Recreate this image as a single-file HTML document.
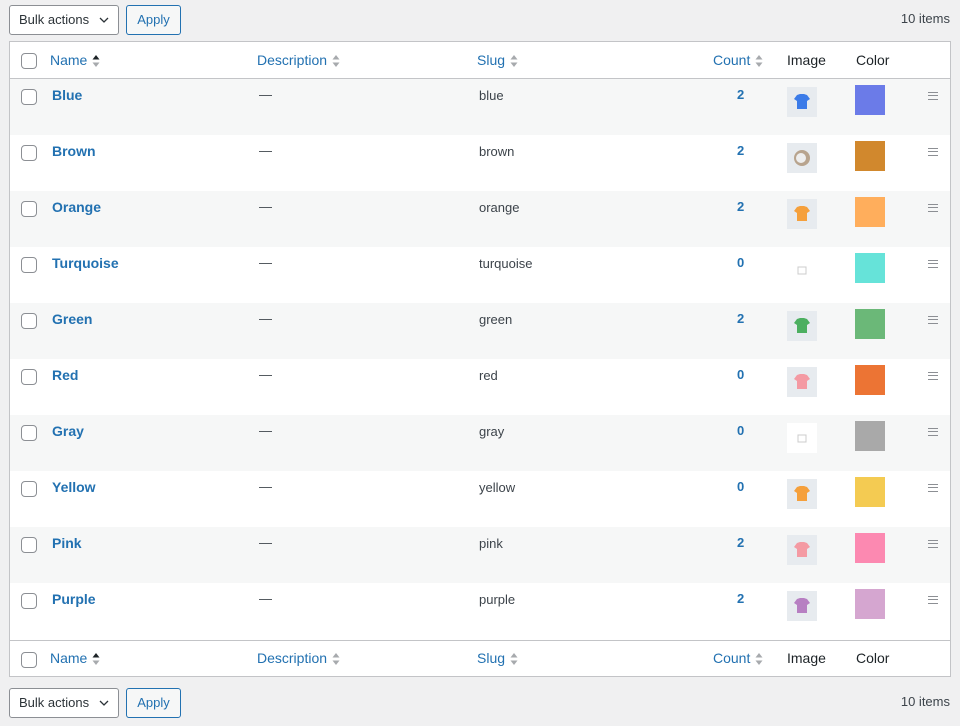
<!DOCTYPE html><html><head><style>
body{margin:0;background:#f0f0f1;font-family:"Liberation Sans",sans-serif;font-size:13px;color:#3c434a;width:960px;height:726px;position:relative;overflow:hidden}
.btn{position:absolute;height:30px;box-sizing:border-box;border-radius:3px;line-height:28px;font-size:13px}
.sel{left:9px;width:110px;border:1px solid #8c8f94;background:#fff;color:#2c3338;padding-left:9px}
.sel svg{position:absolute;right:9px;top:10px}
.apply{left:126px;width:55px;border:1px solid #2271b1;color:#2271b1;background:#f6f7f7;text-align:center}
.items{position:absolute;right:10px;font-size:13px;color:#3c434a}
.tbl{position:absolute;left:9px;top:41px;width:942px;height:636px;box-sizing:border-box;border:1px solid #c3c4c7;background:#fff}
.hd{position:absolute;left:0;width:940px;height:36px}
.row{position:absolute;left:0;width:940px;height:56px}
.odd{background:#f6f7f7}
.cb{position:absolute;left:11px;width:14px;height:14px;border:1px solid #8c8f94;border-radius:4px;background:#fff}
.a{position:absolute;color:#2271b1;font-size:14px}
.t{position:absolute;font-size:13px}
.s{display:inline-block;vertical-align:middle;margin-left:5px}
.thumb{position:absolute;left:777px;top:8px;width:30px;height:30px;background:#e7ebef}
.sw{position:absolute;left:845px;top:6px;width:30px;height:30px}
.dr{position:absolute;left:918px;top:13px;width:10px;height:6px;border-top:1px solid #8c8f94;border-bottom:1px solid #8c8f94}
.dr:after{content:"";position:absolute;left:0;right:0;top:2px;border-top:1px solid #8c8f94}
</style></head><body>
<div class="btn sel" style="top:5px">Bulk actions<svg width="10" height="8" viewBox="0 0 10 8"><path d="M1 2l4 4 4-4" fill="none" stroke="#2c3338" stroke-width="1.3"/></svg></div>
<div class="btn apply" style="top:5px">Apply</div>
<div class="items" style="top:11px">10 items</div>
<div class="btn sel" style="top:688px">Bulk actions<svg width="10" height="8" viewBox="0 0 10 8"><path d="M1 2l4 4 4-4" fill="none" stroke="#2c3338" stroke-width="1.3"/></svg></div>
<div class="btn apply" style="top:688px">Apply</div>
<div class="items" style="top:694px">10 items</div>
<div class="tbl">
<div class="hd" style="top:0;border-bottom:1px solid #c3c4c7">
<div class="cb" style="top:11px"></div>
<div class="a" style="left:40px;top:10px">Name<svg class="s" width="8" height="14"><path d="M4 1l3.5 4.5h-7z" fill="#1d2327"/><path d="M4 13l3.5-4.5h-7z" fill="#a7aaad"/></svg></div>
<div class="a" style="left:247px;top:10px">Description<svg class="s" width="8" height="14"><path d="M4 1l3.5 4.5h-7z" fill="#a7aaad"/><path d="M4 13l3.5-4.5h-7z" fill="#a7aaad"/></svg></div>
<div class="a" style="left:467px;top:10px">Slug<svg class="s" width="8" height="14"><path d="M4 1l3.5 4.5h-7z" fill="#a7aaad"/><path d="M4 13l3.5-4.5h-7z" fill="#a7aaad"/></svg></div>
<div class="a" style="left:703px;top:10px">Count<svg class="s" width="8" height="14"><path d="M4 1l3.5 4.5h-7z" fill="#a7aaad"/><path d="M4 13l3.5-4.5h-7z" fill="#a7aaad"/></svg></div>
<div class="t" style="left:777px;top:10px;font-size:14px;color:#1d2327">Image</div>
<div class="t" style="left:846px;top:10px;font-size:14px;color:#1d2327">Color</div>
</div>
<div class="hd" style="top:598px;border-top:1px solid #c3c4c7">
<div class="cb" style="top:11px"></div>
<div class="a" style="left:40px;top:9px">Name<svg class="s" width="8" height="14"><path d="M4 1l3.5 4.5h-7z" fill="#1d2327"/><path d="M4 13l3.5-4.5h-7z" fill="#a7aaad"/></svg></div>
<div class="a" style="left:247px;top:9px">Description<svg class="s" width="8" height="14"><path d="M4 1l3.5 4.5h-7z" fill="#a7aaad"/><path d="M4 13l3.5-4.5h-7z" fill="#a7aaad"/></svg></div>
<div class="a" style="left:467px;top:9px">Slug<svg class="s" width="8" height="14"><path d="M4 1l3.5 4.5h-7z" fill="#a7aaad"/><path d="M4 13l3.5-4.5h-7z" fill="#a7aaad"/></svg></div>
<div class="a" style="left:703px;top:9px">Count<svg class="s" width="8" height="14"><path d="M4 1l3.5 4.5h-7z" fill="#a7aaad"/><path d="M4 13l3.5-4.5h-7z" fill="#a7aaad"/></svg></div>
<div class="t" style="left:777px;top:9px;font-size:14px;color:#1d2327">Image</div>
<div class="t" style="left:846px;top:9px;font-size:14px;color:#1d2327">Color</div>
</div>
<div class="row odd" style="top:37px"><div class="cb" style="top:10px"></div><div class="a" style="left:42px;top:8px;font-weight:bold">Blue</div><div class="t" style="left:249px;top:8px">—</div><div class="t" style="left:469px;top:9px">blue</div><div class="a" style="left:727px;top:8px;font-weight:bold;font-size:13px">2</div><div class="thumb"><svg width="30" height="30"><path d="M10 8l3-1h4l3 1 3 4-3 2v8h-10v-8l-3-2z" fill="#3b7be8"/></svg></div><div class="sw" style="background:#6b7be8"></div><div class="dr"></div></div>
<div class="row" style="top:93px"><div class="cb" style="top:10px"></div><div class="a" style="left:42px;top:8px;font-weight:bold">Brown</div><div class="t" style="left:249px;top:8px">—</div><div class="t" style="left:469px;top:9px">brown</div><div class="a" style="left:727px;top:8px;font-weight:bold;font-size:13px">2</div><div class="thumb"><svg width="30" height="30"><circle cx="15" cy="15" r="8" fill="#b8a48e"/><circle cx="14" cy="15" r="5" fill="#eee"/></svg></div><div class="sw" style="background:#d1882d"></div><div class="dr"></div></div>
<div class="row odd" style="top:149px"><div class="cb" style="top:10px"></div><div class="a" style="left:42px;top:8px;font-weight:bold">Orange</div><div class="t" style="left:249px;top:8px">—</div><div class="t" style="left:469px;top:9px">orange</div><div class="a" style="left:727px;top:8px;font-weight:bold;font-size:13px">2</div><div class="thumb"><svg width="30" height="30"><path d="M10 8l3-1h4l3 1 3 4-3 2v8h-10v-8l-3-2z" fill="#f5a03c"/></svg></div><div class="sw" style="background:#ffae5c"></div><div class="dr"></div></div>
<div class="row" style="top:205px"><div class="cb" style="top:10px"></div><div class="a" style="left:42px;top:8px;font-weight:bold">Turquoise</div><div class="t" style="left:249px;top:8px">—</div><div class="t" style="left:469px;top:9px">turquoise</div><div class="a" style="left:727px;top:8px;font-weight:bold;font-size:13px">0</div><div class="thumb" style="background:#fff"><svg width="30" height="30"><rect x="11" y="12" width="8" height="7" fill="none" stroke="#ccc"/></svg></div><div class="sw" style="background:#66e3d9"></div><div class="dr"></div></div>
<div class="row odd" style="top:261px"><div class="cb" style="top:10px"></div><div class="a" style="left:42px;top:8px;font-weight:bold">Green</div><div class="t" style="left:249px;top:8px">—</div><div class="t" style="left:469px;top:9px">green</div><div class="a" style="left:727px;top:8px;font-weight:bold;font-size:13px">2</div><div class="thumb"><svg width="30" height="30"><path d="M10 8l3-1h4l3 1 3 4-3 2v8h-10v-8l-3-2z" fill="#4caf60"/></svg></div><div class="sw" style="background:#6bb878"></div><div class="dr"></div></div>
<div class="row" style="top:317px"><div class="cb" style="top:10px"></div><div class="a" style="left:42px;top:8px;font-weight:bold">Red</div><div class="t" style="left:249px;top:8px">—</div><div class="t" style="left:469px;top:9px">red</div><div class="a" style="left:727px;top:8px;font-weight:bold;font-size:13px">0</div><div class="thumb"><svg width="30" height="30"><path d="M10 8l3-1h4l3 1 3 4-3 2v8h-10v-8l-3-2z" fill="#f49aa3"/></svg></div><div class="sw" style="background:#ec7434"></div><div class="dr"></div></div>
<div class="row odd" style="top:373px"><div class="cb" style="top:10px"></div><div class="a" style="left:42px;top:8px;font-weight:bold">Gray</div><div class="t" style="left:249px;top:8px">—</div><div class="t" style="left:469px;top:9px">gray</div><div class="a" style="left:727px;top:8px;font-weight:bold;font-size:13px">0</div><div class="thumb" style="background:#fff"><svg width="30" height="30"><rect x="11" y="12" width="8" height="7" fill="none" stroke="#ccc"/></svg></div><div class="sw" style="background:#a9a9a9"></div><div class="dr"></div></div>
<div class="row" style="top:429px"><div class="cb" style="top:10px"></div><div class="a" style="left:42px;top:8px;font-weight:bold">Yellow</div><div class="t" style="left:249px;top:8px">—</div><div class="t" style="left:469px;top:9px">yellow</div><div class="a" style="left:727px;top:8px;font-weight:bold;font-size:13px">0</div><div class="thumb"><svg width="30" height="30"><path d="M10 8l3-1h4l3 1 3 4-3 2v8h-10v-8l-3-2z" fill="#f5a03c"/></svg></div><div class="sw" style="background:#f4cb52"></div><div class="dr"></div></div>
<div class="row odd" style="top:485px"><div class="cb" style="top:10px"></div><div class="a" style="left:42px;top:8px;font-weight:bold">Pink</div><div class="t" style="left:249px;top:8px">—</div><div class="t" style="left:469px;top:9px">pink</div><div class="a" style="left:727px;top:8px;font-weight:bold;font-size:13px">2</div><div class="thumb"><svg width="30" height="30"><path d="M10 8l3-1h4l3 1 3 4-3 2v8h-10v-8l-3-2z" fill="#f49aa3"/></svg></div><div class="sw" style="background:#fc89b1"></div><div class="dr"></div></div>
<div class="row" style="top:541px"><div class="cb" style="top:10px"></div><div class="a" style="left:42px;top:8px;font-weight:bold">Purple</div><div class="t" style="left:249px;top:8px">—</div><div class="t" style="left:469px;top:9px">purple</div><div class="a" style="left:727px;top:8px;font-weight:bold;font-size:13px">2</div><div class="thumb"><svg width="30" height="30"><path d="M10 8l3-1h4l3 1 3 4-3 2v8h-10v-8l-3-2z" fill="#b77fc2"/></svg></div><div class="sw" style="background:#d5a6d0"></div><div class="dr"></div></div>
</div>
</body></html>
